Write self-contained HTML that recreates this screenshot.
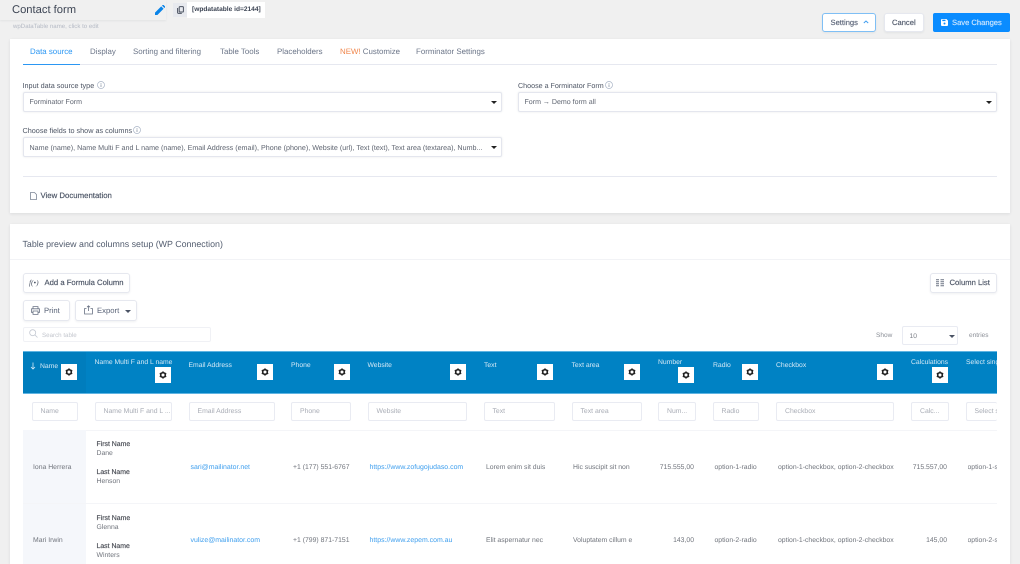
<!DOCTYPE html>
<html><head><meta charset="utf-8"><style>
*{box-sizing:border-box}
html,body{margin:0;padding:0}
body{width:1020px;height:564px;overflow:hidden;background:#f0f0f0;position:relative;font-family:"Liberation Sans",sans-serif;color:#5c6370;text-rendering:geometricPrecision;-webkit-font-smoothing:antialiased}
#w{position:absolute;left:0;top:0;width:1020px;height:564px;overflow:hidden;background:#f0f0f0;filter:blur(.3px)}
.a{position:absolute}
.t{position:absolute;white-space:nowrap;line-height:12px;height:12px;font-size:6.85px}
.card{position:absolute;background:#fff;box-shadow:0 1px 3px rgba(40,50,70,.1)}
.btn{position:absolute;background:#fff;border:1px solid #e6e8ef;border-radius:3px;box-shadow:0 1px 2px rgba(40,50,70,.07)}
.sel{position:absolute;background:#fff;border:1px solid #e4e6ee;border-radius:2px;box-shadow:0 0 2px rgba(40,50,70,.1)}
.caret{position:absolute;width:0;height:0;border-left:3px solid transparent;border-right:3px solid transparent;border-top:3px solid #222}
.tab{font-size:7.9px;color:#6b7588;top:45.5px}
.lab{font-size:7.25px;color:#4b5362}
.hd{font-size:6.8px;color:#d4e9f6}
.m{-webkit-text-stroke:.15px currentColor}
.gear{position:absolute;width:16px;height:16px;background:#fff}
.gear svg{position:absolute;left:4px;top:4px}
.fi{position:absolute;top:402px;height:19px;border:1px solid #e9ebf2;border-radius:2px;background:#fff;color:#a9adb6;font-size:6.85px;line-height:18px;padding-left:8px;white-space:nowrap;overflow:hidden}
.link{color:#3f9fee;font-size:6.95px}
.c{color:#71757d}
.b{color:#4d5058;font-size:6.9px;-webkit-text-stroke:.2px currentColor}
.r{text-align:right}
</style></head><body><div id="w">
<svg width="0" height="0" style="position:absolute"><defs><symbol id="g" viewBox="0 0 10 10"><circle cx="5" cy="5" r="2.900" fill="none" stroke="#222" stroke-width="2"/><path d="M5 .4V2M5 8V9.600M1 2.700 2.400 3.500M7.600 6.500 9 7.300M1 7.300 2.400 6.500M7.600 3.500 9 2.700" stroke="#222" stroke-width="1.700"/></symbol></defs></svg>

<!-- top -->
<div class="a" style="left:0;top:0;width:166px;height:20px;background:#f0f0f0;box-shadow:0 1px 2px rgba(40,50,70,.07)"></div>
<div class="t" style="left:12px;top:3px;height:14px;line-height:14px;font-size:11.200px;color:#3d4554">Contact form</div>
<svg class="a" style="left:155px;top:5px" width="10" height="10" viewBox="0 0 10 10"><path d="M0 10V7.600L6.200 1.400 8.600 3.800 2.400 10ZM7 .6 7.600 0a.8.8 0 0 1 1 0L10 1.400a.8.8 0 0 1 0 1L9.400 3Z" fill="#0a84e8"/></svg>
<div class="a" style="left:173px;top:3px;width:14px;height:14px;background:#e7e9ee"></div>
<svg class="a" style="left:177px;top:6px" width="7" height="8" viewBox="0 0 7 8"><rect x="2.200" y=".6" width="4.200" height="5.400" rx=".8" fill="none" stroke="#4a5160"/><path d="M.6 2V6.400a1 1 0 0 0 1 1H4.800" fill="none" stroke="#4a5160"/></svg>
<div class="a" style="left:187px;top:2px;width:78px;height:16px;background:#fff"></div>
<div class="t" style="left:192px;top:4px;font-size:6.600px;font-weight:bold;color:#3d4554">[wpdatatable id=2144]</div>
<div class="t" style="left:13px;top:21px;font-size:6.100px;color:#b4b9c4">wpDataTable name, click to edit</div>

<div class="btn" style="left:822px;top:13px;width:54px;height:19px;border-color:#7fbff5"></div>
<div class="t m" style="left:830.500px;top:16.500px;font-size:7.600px;color:#5a6478">Settings</div>
<svg class="a" style="left:863px;top:20px" width="6" height="4" viewBox="0 0 6 4"><path d="M.8 3 3 1 5.200 3" fill="none" stroke="#3d9cf0"/></svg>
<div class="btn" style="left:884px;top:13px;width:40px;height:19px"></div>
<div class="t m" style="left:892px;top:16.500px;font-size:7.600px;color:#4f586a">Cancel</div>
<div class="a" style="left:933px;top:13px;width:77px;height:19px;background:#0a8cff;border-radius:2px"></div>
<svg class="a" style="left:941px;top:19px" width="7" height="7" viewBox="0 0 7 7"><path d="M0 1a1 1 0 0 1 1-1H5.400L7 1.600V6a1 1 0 0 1-1 1H1a1 1 0 0 1-1-1Z" fill="#fff"/><rect x="1.300" y=".7" width="3.200" height="1.400" fill="#0a8cff"/><circle cx="3.500" cy="4.500" r="1" fill="#0a8cff"/></svg>
<div class="t m" style="left:952px;top:16.500px;font-size:7.600px;color:#cfe7ff">Save Changes</div>

<!-- card 1 -->
<div class="card" style="left:10px;top:39px;width:1000px;height:174px"></div>
<div class="t tab" style="left:30px;color:#2b97f3">Data source</div>
<div class="t tab" style="left:90px">Display</div>
<div class="t tab" style="left:133px">Sorting and filtering</div>
<div class="t tab" style="left:220px">Table Tools</div>
<div class="t tab" style="left:277px">Placeholders</div>
<div class="t tab" style="left:340px"><span style="color:#f0854a">NEW!</span> Customize</div>
<div class="t tab" style="left:416px">Forminator Settings</div>
<div class="a" style="left:23px;top:64px;width:974px;height:1px;background:#e6e8f0"></div>
<div class="a" style="left:23px;top:64px;width:57px;height:1px;background:#2b97f3"></div>

<div class="t lab" style="left:22.500px;top:79.500px">Input data source type</div>
<svg class="a" style="left:96.500px;top:81px" width="8" height="8" viewBox="0 0 8 8"><circle cx="4" cy="4" r="3.500" fill="none" stroke="#a9b4c6" stroke-width=".7"/><path d="M4 3.400V6M4 2V2.700" stroke="#7d899c" stroke-width=".7"/></svg>
<div class="sel" style="left:23px;top:92px;width:479px;height:20px"></div>
<div class="t" style="left:29.500px;top:97px;font-size:7.050px;color:#5e6470">Forminator Form</div>
<div class="caret" style="left:491px;top:100.500px"></div>

<div class="t lab" style="left:518px;top:79.500px;font-size:7.150px">Choose a Forminator Form</div>
<svg class="a" style="left:604.500px;top:81px" width="8" height="8" viewBox="0 0 8 8"><circle cx="4" cy="4" r="3.500" fill="none" stroke="#a9b4c6" stroke-width=".7"/><path d="M4 3.400V6M4 2V2.700" stroke="#7d899c" stroke-width=".7"/></svg>
<div class="sel" style="left:518px;top:92px;width:479px;height:20px"></div>
<div class="t" style="left:524.500px;top:97px;font-size:7.050px;color:#5e6470">Form → Demo form all</div>
<div class="caret" style="left:986px;top:100.500px"></div>

<div class="t lab" style="left:22.500px;top:124.500px">Choose fields to show as columns</div>
<svg class="a" style="left:133px;top:126px" width="8" height="8" viewBox="0 0 8 8"><circle cx="4" cy="4" r="3.500" fill="none" stroke="#a9b4c6" stroke-width=".7"/><path d="M4 3.400V6M4 2V2.700" stroke="#7d899c" stroke-width=".7"/></svg>
<div class="sel" style="left:23px;top:137px;width:479px;height:20px"></div>
<div class="t" style="left:29.500px;top:141.500px;font-size:7.150px;color:#5e6470">Name (name), Name Multi F and L name (name), Email Address (email), Phone (phone), Website (url), Text (text), Text area (textarea), Numb...</div>
<div class="caret" style="left:491px;top:146px"></div>
<div class="a" style="left:23px;top:176px;width:974px;height:1px;background:#e6e8f0"></div>
<svg class="a" style="left:30px;top:192px" width="7" height="8" viewBox="0 0 7 8"><path d="M.5.5H4.500L6.500 2.500V7.500H.5Z" fill="none" stroke="#7d8696" stroke-width=".8"/></svg>
<div class="t m" style="left:40.500px;top:190px;font-size:7.800px;color:#4a5364">View Documentation</div>

<!-- card 2 -->
<div class="card" style="left:10px;top:224px;width:1000px;height:340px"></div>
<div class="t" style="left:22.500px;top:237.500px;font-size:8.850px;color:#525c6e">Table preview and columns setup (WP Connection)</div>
<div class="a" style="left:10px;top:259px;width:1000px;height:1px;background:#f2f3f6"></div>

<div class="btn" style="left:23px;top:273px;width:107px;height:20px"></div>
<div class="t" style="left:29px;top:277px;font-size:7.400px;font-family:'Liberation Serif',serif;font-style:italic;color:#4a5364">f(•)</div>
<div class="t m" style="left:44.500px;top:277px;font-size:7.700px;color:#4a5364">Add a Formula Column</div>
<div class="btn" style="left:23px;top:300px;width:47px;height:21px"></div>
<svg class="a" style="left:31px;top:306px" width="9" height="9" viewBox="0 0 9 9"><path d="M2 2.800V.6H7V2.800M2 6.500H.6V2.800H8.400V6.500H7M2 5H7V8.400H2Z" fill="none" stroke="#687183" stroke-width=".8"/></svg>
<div class="t" style="left:44px;top:304.500px;font-size:7.700px;color:#5a6478">Print</div>
<div class="btn" style="left:75px;top:300px;width:62px;height:21px"></div>
<svg class="a" style="left:84px;top:305px" width="9" height="10" viewBox="0 0 9 10"><path d="M2.500 3.500H.6V9H8.400V3.500H6.500M4.500 6V.8M3 2.200 4.500.8 6 2.200" fill="none" stroke="#687183" stroke-width=".8"/></svg>
<div class="t" style="left:97px;top:304.500px;font-size:7.700px;color:#5a6478">Export</div>
<div class="caret" style="left:124.500px;top:310px;border-top-color:#4a5364"></div>
<div class="a" style="left:23px;top:326.500px;width:188px;height:15px;border:1px solid #f0f1f5;border-radius:2px;background:#fff"></div>
<svg class="a" style="left:29px;top:329px" width="9" height="9" viewBox="0 0 9 9"><circle cx="3.700" cy="3.700" r="3" fill="none" stroke="#c4c9d2" stroke-width=".8"/><path d="M6 6 8.500 8.500" stroke="#c4c9d2" stroke-width=".8"/></svg>
<div class="t" style="left:42px;top:329.500px;font-size:6.200px;color:#c4c7ce">Search table</div>

<div class="btn" style="left:930px;top:273px;width:67px;height:20px"></div>
<svg class="a" style="left:936px;top:278.500px" width="8" height="8" viewBox="0 0 8 8"><path d="M0 .7H3M0 2.700H3M0 4.700H3M0 6.700H3M4.500 .7H8M4.500 2.700H8M4.500 4.700H8M4.500 6.700H8" stroke="#6a7282"/></svg>
<div class="t m" style="left:949.500px;top:276.500px;font-size:7.650px;color:#4a5364">Column List</div>
<div class="t" style="left:876px;top:330px;font-size:6.500px;color:#8b8f97">Show</div>
<div class="a" style="left:902px;top:326px;width:56px;height:19px;border:1px solid #e9ebf2;border-radius:2px;background:#fff"></div>
<div class="t" style="left:909.500px;top:331px;font-size:6.700px;color:#7d8088">10</div>
<div class="caret" style="left:948.500px;top:335px;border-top-color:#4a5364"></div>
<div class="t" style="left:969px;top:330px;font-size:6.500px;color:#8b8f97">entries</div>

<!-- table head -->
<div class="a" style="left:23px;top:350.500px;width:974px;height:43px;background:#0082c4;border-top:1px solid #5fb4e2;border-bottom:1px solid #5fb4e2"></div>
<div class="a" style="left:23px;top:351.500px;width:63px;height:41px;background:#007dbd"></div>
<svg class="a" style="left:30px;top:362px" width="6" height="8" viewBox="0 0 6 8"><path d="M3 .5V7M1 5 3 7 5 5" fill="none" stroke="#d4e9f6" stroke-width=".8"/></svg>
<div class="t hd" style="left:40px;top:360.500px">Name</div>
<div class="t hd" style="left:94.500px;top:357px">Name Multi F and L name</div>
<div class="t hd" style="left:188.500px;top:360px">Email Address</div>
<div class="t hd" style="left:291px;top:360px">Phone</div>
<div class="t hd" style="left:367.500px;top:360px">Website</div>
<div class="t hd" style="left:484px;top:360px">Text</div>
<div class="t hd" style="left:571.500px;top:360px">Text area</div>
<div class="t hd" style="left:658px;top:357px">Number</div>
<div class="t hd" style="left:713px;top:360px">Radio</div>
<div class="t hd" style="left:776px;top:360px">Checkbox</div>
<div class="t hd" style="left:911px;top:357px">Calculations</div>
<div class="a" style="left:966px;top:356px;width:31px;height:13px;overflow:hidden"><div class="t hd" style="left:0;top:1px">Select single</div></div>

<div class="gear" style="left:60.500px;top:363.500px"><svg width="8" height="8" viewBox="0 0 10 10"><use href="#g"/></svg></div>
<div class="gear" style="left:154.500px;top:367px"><svg width="8" height="8" viewBox="0 0 10 10"><use href="#g"/></svg></div>
<div class="gear" style="left:257px;top:363.500px"><svg width="8" height="8" viewBox="0 0 10 10"><use href="#g"/></svg></div>
<div class="gear" style="left:333.500px;top:363.500px"><svg width="8" height="8" viewBox="0 0 10 10"><use href="#g"/></svg></div>
<div class="gear" style="left:449.500px;top:363.500px"><svg width="8" height="8" viewBox="0 0 10 10"><use href="#g"/></svg></div>
<div class="gear" style="left:537px;top:363.500px"><svg width="8" height="8" viewBox="0 0 10 10"><use href="#g"/></svg></div>
<div class="gear" style="left:624px;top:363.500px"><svg width="8" height="8" viewBox="0 0 10 10"><use href="#g"/></svg></div>
<div class="gear" style="left:678px;top:367px"><svg width="8" height="8" viewBox="0 0 10 10"><use href="#g"/></svg></div>
<div class="gear" style="left:741.700px;top:363.500px"><svg width="8" height="8" viewBox="0 0 10 10"><use href="#g"/></svg></div>
<div class="gear" style="left:877px;top:363.500px"><svg width="8" height="8" viewBox="0 0 10 10"><use href="#g"/></svg></div>
<div class="gear" style="left:931.500px;top:367px"><svg width="8" height="8" viewBox="0 0 10 10"><use href="#g"/></svg></div>

<!-- filters -->
<div class="fi" style="left:31.500px;width:46px">Name</div>
<div class="fi" style="left:94.500px;width:77px">Name Multi F and L ...</div>
<div class="fi" style="left:188.500px;width:86px">Email Address</div>
<div class="fi" style="left:291px;width:60px">Phone</div>
<div class="fi" style="left:367.500px;width:99px">Website</div>
<div class="fi" style="left:483.500px;width:71px">Text</div>
<div class="fi" style="left:571.500px;width:70px">Text area</div>
<div class="fi" style="left:658px;width:38px">Num...</div>
<div class="fi" style="left:712.500px;width:46.500px">Radio</div>
<div class="fi" style="left:776px;width:118px">Checkbox</div>
<div class="fi" style="left:911px;width:37.500px">Calc...</div>
<div class="fi" style="left:965.500px;width:31.500px;border-right:0">Select s</div>
<div class="a" style="left:23px;top:429.500px;width:974px;height:1px;background:#f4f5f8"></div>

<!-- rows -->
<div class="a" style="left:23px;top:430px;width:63px;height:134px;background:#f5f7fb"></div>
<div class="a" style="left:23px;top:503px;width:974px;height:1px;background:#f4f5f8"></div>

<div class="t c" style="left:33px;top:461.500px">Iona Herrera</div>
<div class="t b" style="left:96.500px;top:438.500px">First Name</div>
<div class="t c" style="left:96.500px;top:448px">Dane</div>
<div class="t b" style="left:96.500px;top:466.500px">Last Name</div>
<div class="t c" style="left:96.500px;top:476px">Henson</div>
<div class="t link" style="left:190.500px;top:461.500px">sari@mailinator.net</div>
<div class="t c" style="left:293px;top:461.500px">+1 (177) 551-6767</div>
<div class="t link" style="left:369.500px;top:461.500px">https://www.zofugojudaso.com</div>
<div class="t c" style="left:486px;top:461.500px">Lorem enim sit duis</div>
<div class="t c" style="left:573px;top:461.500px">Hic suscipit sit non</div>
<div class="t c r" style="left:644px;width:50px;top:461.500px">715.555,00</div>
<div class="t c" style="left:714.500px;top:461.500px">option-1-radio</div>
<div class="t c" style="left:778px;top:461.500px">option-1-checkbox, option-2-checkbox</div>
<div class="t c r" style="left:897px;width:50px;top:461.500px">715.557,00</div>
<div class="a" style="left:967.500px;top:461px;width:29.500px;height:13px;overflow:hidden"><div class="t c" style="left:0;top:.5px">option-1-single</div></div>

<div class="t c" style="left:33px;top:535px">Mari Irwin</div>
<div class="t b" style="left:96.500px;top:512.500px">First Name</div>
<div class="t c" style="left:96.500px;top:522px">Glenna</div>
<div class="t b" style="left:96.500px;top:540.500px">Last Name</div>
<div class="t c" style="left:96.500px;top:550px">Winters</div>
<div class="t link" style="left:190.500px;top:535px">vulize@mailinator.com</div>
<div class="t c" style="left:293px;top:535px">+1 (799) 871-7151</div>
<div class="t link" style="left:369.500px;top:535px">https://www.zepem.com.au</div>
<div class="t c" style="left:486px;top:535px">Elit aspernatur nec</div>
<div class="t c" style="left:573px;top:535px">Voluptatem cillum e</div>
<div class="t c r" style="left:644px;width:50px;top:535px">143,00</div>
<div class="t c" style="left:714.500px;top:535px">option-2-radio</div>
<div class="t c" style="left:778px;top:535px">option-1-checkbox, option-2-checkbox</div>
<div class="t c r" style="left:897px;width:50px;top:535px">145,00</div>
<div class="a" style="left:967.500px;top:534.500px;width:29.500px;height:13px;overflow:hidden"><div class="t c" style="left:0;top:.5px">option-2-single</div></div>
</div></body></html>
